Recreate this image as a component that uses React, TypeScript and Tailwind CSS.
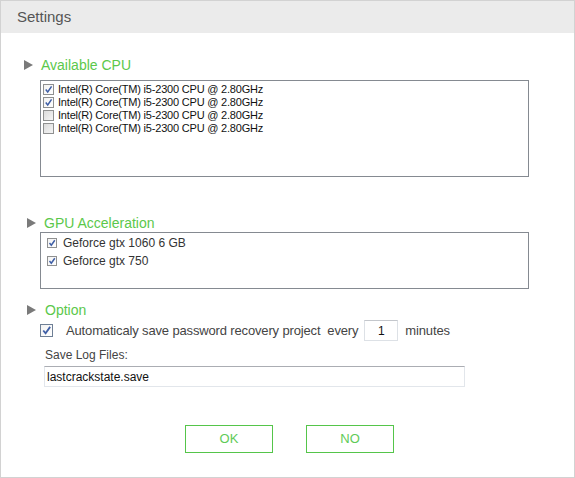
import React from "react";

function Tri() {
  return (
    <svg width="10" height="10" viewBox="0 0 10 10" className="shrink-0">
      <polygon points="0,0 9,5 0,10" fill="#7a7a7a" />
    </svg>
  );
}

function Check({ size, checked, variant = "plain" }: { size: number; checked: boolean; variant?: "plain" | "blue" }) {
  const border = variant === "blue" ? "#6e7f95" : "#8f9090";
  return (
    <svg width={size} height={size} viewBox={`0 0 ${size} ${size}`} className="shrink-0">
      <defs>
        <linearGradient id={`g${size}${checked ? 1 : 0}`} x1="0" y1="0" x2="1" y2="1">
          <stop offset="0" stopColor={checked ? "#f2f2f2" : "#dadada"} />
          <stop offset="1" stopColor={checked ? "#ffffff" : "#f6f6f6"} />
        </linearGradient>
      </defs>
      <rect x="0.5" y="0.5" width={size - 1} height={size - 1} fill={`url(#g${size}${checked ? 1 : 0})`} stroke={border} />
      {checked && (
        <path
          d={`M ${size * 0.25} ${size * 0.5} L ${size * 0.43} ${size * 0.72} L ${size * 0.78} ${size * 0.22}`}
          fill="none"
          stroke="#3f5fa6"
          strokeWidth={size > 11 ? 1.8 : 1.5}
        />
      )}
    </svg>
  );
}

const cpus = [true, true, false, false];
const gpus = ["Geforce gtx 1060 6 GB", "Geforce gtx 750"];

export default function App() {
  return (
    <div
      className="w-[575px] h-[478px] border border-[#d2d2d2] bg-white flex flex-col text-[#444]"
      style={{ fontFamily: '"Liberation Sans", Arial, sans-serif' }}
    >
      <div className="h-[32px] bg-[#ebebeb] flex items-center pl-[16px] text-[15px] text-[#555] shrink-0">Settings</div>

      {/* Available CPU */}
      <div className="mt-[24px] h-[16px] flex items-center pl-[23px] gap-[7px]">
        <Tri />
        <span className="text-[14px] text-[#5bc84b] leading-none">Available CPU</span>
      </div>
      <div className="mt-[7px] ml-[39px] w-[489px] h-[97px] border border-[#858a91] pt-[2px] pl-[2px] flex flex-col">
        {cpus.map((c, i) => (
          <div key={i} className="h-[13px] flex items-center gap-[4px]">
            <Check size={11} checked={c} />
            <span className="text-[11px] tracking-[-0.2px] text-[#111] leading-none">
              Intel(R) Core(TM) i5-2300 CPU @ 2.80GHz
            </span>
          </div>
        ))}
      </div>

      {/* GPU */}
      <div className="mt-[38px] h-[16px] flex items-center pl-[26px] gap-[7px]">
        <Tri />
        <span className="text-[14px] text-[#5bc84b] leading-none">GPU Acceleration</span>
      </div>
      <div className="mt-[1px] ml-[39px] w-[489px] h-[57px] border border-[#858a91] pt-[1px] pl-[6px] flex flex-col">
        {gpus.map((g) => (
          <div key={g} className="h-[18px] flex items-center gap-[6px]">
            <Check size={10} checked={true} />
            <span className="text-[12px] text-[#333] leading-none">{g}</span>
          </div>
        ))}
      </div>

      {/* Option */}
      <div className="mt-[13px] h-[16px] flex items-center pl-[26px] gap-[8px]">
        <Tri />
        <span className="text-[14px] text-[#5bc84b] leading-none">Option</span>
      </div>
      <div className="mt-[2px] h-[21px] flex items-center pl-[39px]">
        <Check size={13} checked={true} variant="blue" />
        <span className="ml-[13px] text-[13px] tracking-[-0.15px] text-[#444] leading-none whitespace-pre">
          Automaticaly save password recovery project  every
        </span>
        <div className="ml-[6px] w-[34px] h-[21px] border border-[#dde1e6] border-t-[#c4c7cc] flex items-center justify-center text-[12px] text-[#111]">
          1
        </div>
        <span className="ml-[7px] text-[13px] tracking-[-0.15px] text-[#444] leading-none">minutes</span>
      </div>

      <div className="mt-[6px] h-[16px] flex items-center pl-[44px] text-[12px] text-[#444]">Save Log Files:</div>
      <div className="mt-[3px] ml-[43px] w-[421px] h-[21px] border border-[#e2e6eb] border-t-[#abadb3] flex items-center pl-[2px] text-[12px] text-[#111]">
        lastcrackstate.save
      </div>

      <div className="mt-[38px] flex pl-[184px] gap-[33px]">
        <button className="w-[88px] h-[28px] border border-[#55c54a] text-[#5fcb58] text-[13px] bg-white flex items-center justify-center">
          OK
        </button>
        <button className="w-[88px] h-[28px] border border-[#55c54a] text-[#5fcb58] text-[13px] bg-white flex items-center justify-center">
          NO
        </button>
      </div>
    </div>
  );
}
